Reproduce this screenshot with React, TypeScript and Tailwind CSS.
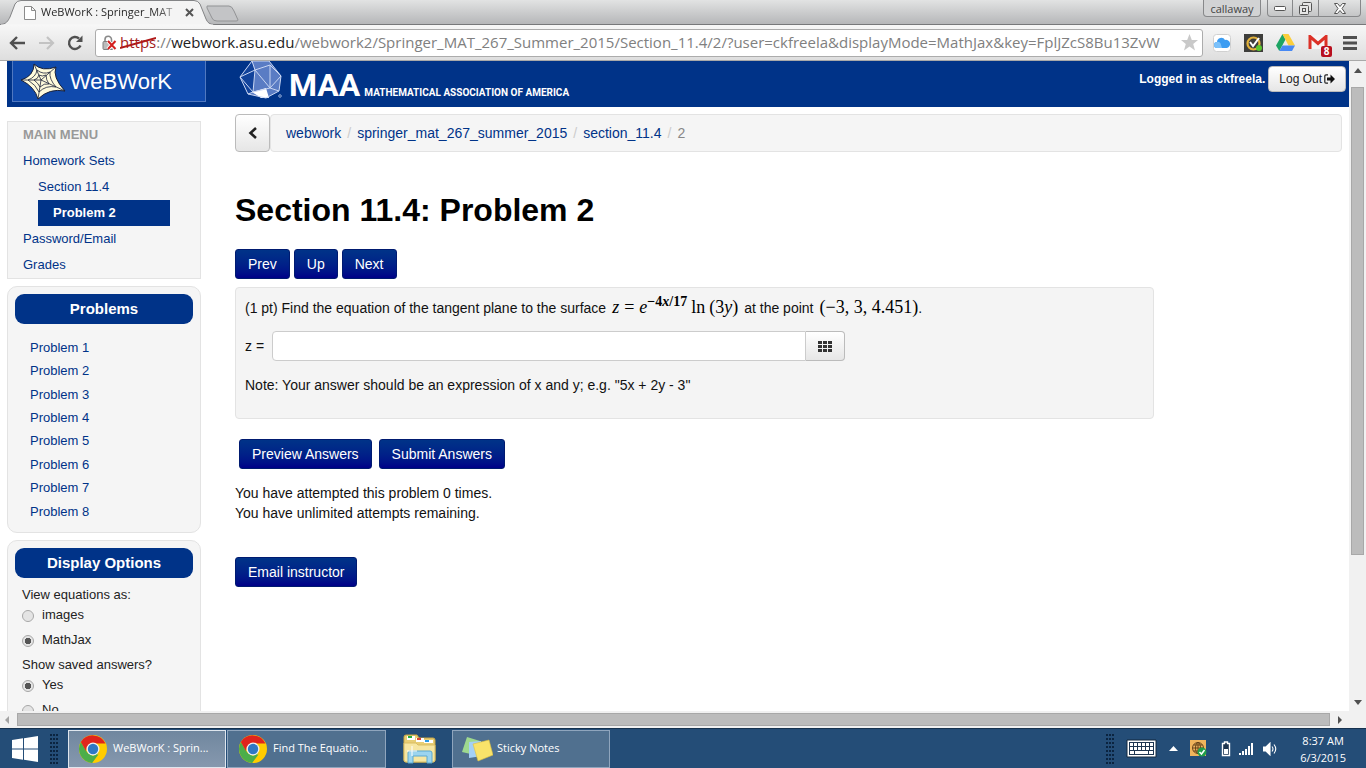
import React, { useState } from 'react';

const uiFont = "font-['Open_Sans','Noto_Sans',sans-serif]";
const mathFont = "font-['Liberation_Serif',serif]";

const problems = [1, 2, 3, 4, 5, 6, 7, 8];

const urlPath =
  '/webwork2/Springer_MAT_267_Summer_2015/Section_11.4/2/?user=ckfreela&displayMode=MathJax&key=FplJZcS8Bu13ZvW';

const ChromeLogo: React.FC = () => (
  <svg width="28" height="28" viewBox="0 0 28 28" className="shrink-0">
    <circle cx="14" cy="14" r="14" fill="#fc0" />
    <path d="M1.9 7A14 14 0 0 0 13 28l6.500-10.500L14 21a7 7 0 0 1-6-3.500Z" fill="#4cae49" />
    <path d="M1.9 7 8 17.500 14 21l5.500-1.500L13 28" fill="#4cae49" />
    <path d="M1.900 7A14 14 0 0 1 26.500 8.500H14L8 12 7 16Z" fill="#e0241c" />
    <circle cx="14" cy="14" r="6.500" fill="#f1f1f1" />
    <circle cx="14" cy="14" r="5.200" fill="#2f78c4" />
  </svg>
);

const Grip: React.FC = () => (
  <svg width="8" height="32" viewBox="0 0 8 32" fill="#0b2440" className="shrink-0">
    {[1, 5, 9, 13, 17, 21, 25, 29].map((y) => (
      <g key={y}>
        <rect x="0" y={y} width="2" height="2" />
        <rect x="3" y={y} width="2" height="2" />
        <rect x="6" y={y} width="2" height="2" />
      </g>
    ))}
  </svg>
);

const WebLogo: React.FC = () => (
  <svg width="46" height="40" viewBox="0 0 46 40" className="shrink-0" strokeLinejoin="round">
    <path
      d="M14 3Q22 11 36 6Q32 16 45 30Q29 27 18 38Q15 26 1 19Q14 15 14 3Z"
      fill="#fffbdc"
      stroke="#1c2238"
    />
    <g fill="none" stroke="#1c2238" strokeWidth=".8">
      <path d="M14 3 21 19 36 6M21 19 45 30M21 19 18 38M21 19 1 19" />
      <path d="M17 9Q23 14 30 11Q29 18 36 26Q26 24 19 31Q16 24 8 19Q16 16 17 9Z" />
      <path d="M19 14Q22 16 26 14Q26 19 29 23Q24 22 20 26Q18 22 14 19Q18 18 19 14Z" />
    </g>
  </svg>
);

const MaaLogo: React.FC = () => (
  <svg width="44" height="38" viewBox="0 0 44 38" className="shrink-0" strokeLinejoin="round">
    <path d="M13 0 30 0 42 15 40 30 27 37 9 33 1 16Z" fill="#5a7cc4" />
    <path d="M1 16 9 33 14 31 16 11 13 0Z" fill="#12439b" />
    <path d="M13 31 27 27 30 37 22 37Z" fill="#fff" />
    <g fill="none" stroke="#c9d6f2" strokeWidth="1">
      <path d="M13 0 30 0 42 15 40 30 27 37 9 33 1 16ZM13 0 16 9 31 4 42 15 31 27 14 31 16 9 1 16 14 31 9 33M31 4V27L40 30M16 9 31 27" />
    </g>
    <circle cx="41" cy="35" r="1.300" fill="none" stroke="#c9d6f2" strokeWidth=".7" />
  </svg>
);

const TabStrip: React.FC = () => (
  <div className={`flex h-[25px] shrink-0 border-b border-[#77787a] bg-linear-to-b from-[#e2e3e3] to-[#b6b7b9] ${uiFont}`}>
    <div className="relative flex h-[25px] w-[206px] items-center pl-6">
      <svg className="absolute top-0 left-0" width="240" height="25" viewBox="0 0 240 25">
        <path d="M207 6h22q3 0 5 5l4 9q0 1-2 1h-19q-4 0-5-3l-5-10q0-2 0-2Z" fill="#c3c4c6" stroke="#929395" />
        <path d="M0 24.500C6 24.500 8 21 10 17L15 4Q17 .5 21 .5H194Q198 .5 200 4L206 19Q208 24.500 214 24.500V26H0Z" fill="#f4f4f4" stroke="#838486" />
        <path d="M1 25h212" stroke="#f8f8f8" />
      </svg>
      <svg className="relative" width="12" height="14" viewBox="0 0 12 14" fill="#fff" stroke="#8b8b8b">
        <path d="M.5.5h7l4 4v9H.5ZM7.500.5v4h4" />
      </svg>
      <span className="relative ml-[5px] w-[140px] bg-linear-to-r from-[#222] from-80% to-[#ccc] bg-clip-text text-[11px] whitespace-nowrap text-transparent">
        WeBWorK : Springer_MAT
      </span>
      <button aria-label="Close tab" className="relative ml-1">
        <svg width="9" height="9" viewBox="0 0 9 9" stroke="#555" strokeWidth="2">
          <path d="m1 1 7 7M8 1 1 8" />
        </svg>
      </button>
    </div>
    <div className="ml-auto flex h-[17px] pr-[5px] text-[#444]">
      <button className="mr-1.5 w-[58px] rounded-b border border-t-0 border-[#87888a] bg-[#d2d3d4] text-[11px] leading-[15px]">
        callaway
      </button>
      <button aria-label="Minimize" className="flex w-[26px] items-center justify-center rounded-bl border border-t-0 border-[#87888a]">
        <svg width="12" height="5" fill="#fff" stroke="#555"><rect x=".5" y=".5" width="11" height="4" rx="1" /></svg>
      </button>
      <button aria-label="Restore" className="flex w-[25px] items-center justify-center border-b border-[#87888a]">
        <svg width="13" height="13" fill="#e6e6e6" stroke="#555">
          <rect x="3.500" y=".5" width="9" height="9" rx="1" />
          <rect x=".5" y="3.500" width="9" height="9" rx="1" />
          <rect x="3.500" y="6.500" width="3" height="3" />
        </svg>
      </button>
      <button aria-label="Close" className="flex w-[43px] items-center justify-center rounded-br border border-t-0 border-[#87888a]">
        <svg width="12" height="11" fill="#fff" stroke="#555">
          <path d="M.5.5h3L6 3.500 8.500.5h3L8 5.500l3.500 5h-3L6 7.500l-2.500 3h-3l3.500-5Z" />
        </svg>
      </button>
    </div>
  </div>
);

const Toolbar: React.FC = () => {
  const [path, setPath] = useState(urlPath);

  return (
    <div className={`flex h-9 shrink-0 items-center border-b border-[#a9a9a9] bg-linear-to-b from-[#f7f7f7] to-[#dedede] px-[9px] ${uiFont}`}>
      <button aria-label="Back">
        <svg width="16" height="14" viewBox="0 0 16 14" fill="none" stroke="#505050" strokeWidth="2.400">
          <path d="M16 7H2M8 1 2 7l6 6" />
        </svg>
      </button>
      <button aria-label="Forward" className="ml-3.5">
        <svg width="16" height="14" viewBox="0 0 16 14" fill="none" stroke="#c3c3c3" strokeWidth="2.200">
          <path d="M0 7h14M8 1l6 6-6 6" />
        </svg>
      </button>
      <button aria-label="Reload" className="ml-3">
        <svg width="16" height="16" viewBox="0 0 16 16" fill="none" stroke="#505050" strokeWidth="2.400">
          <path d="M13.500 10.500A6 6 0 1 1 12 3.500" />
          <path d="M15.500.5V7H9Z" fill="#505050" stroke="none" />
        </svg>
      </button>
      <div className="ml-3 flex h-7 min-w-0 flex-1 items-center rounded-[3px] border border-[#acacac] bg-white pr-1 pl-1.5 text-[15px]">
        <svg width="15" height="16" viewBox="0 0 15 16" className="shrink-0">
          <path d="M3 7V4.500a3 3 0 0 1 6.500 0V7" fill="none" stroke="#8a8a8a" strokeWidth="1.600" />
          <rect x="1" y="6.500" width="10" height="8" rx="1" fill="#bbb" stroke="#808080" />
          <path d="m6 6 7.500 8M13.500 6 6 14" stroke="#fff" strokeWidth="4" />
          <path d="m6 6 7.500 8M13.500 6 6 14" stroke="#d4201f" strokeWidth="2" />
        </svg>
        <span className="relative ml-[3px] text-[#a31b1b]">
          https
          <svg className="absolute top-1 left-0" width="36" height="15" viewBox="0 0 36 15">
            <path d="M0 13 36 3" stroke="#b01919" strokeWidth="2" />
          </svg>
        </span>
        <span className="text-[#808080]">://</span>
        <label htmlFor="url" className="text-[#222]">webwork.asu.edu</label>
        <input
          id="url"
          type="text"
          value={path}
          onChange={(e) => setPath(e.target.value)}
          className="min-w-0 flex-1 text-[#808080] outline-none"
        />
        <button aria-label="Bookmark" className="ml-1 shrink-0">
          <svg width="17" height="17" viewBox="0 0 17 17" fill="#c9c9c9">
            <path d="m8.500 0 2.300 6H17l-4.800 4 1.800 6.500-5.500-4-5.500 4L4.800 10 0 6h6.200Z" />
          </svg>
        </button>
      </div>
      <div className="ml-2.5 flex shrink-0 items-center gap-[13px]">
        <svg width="18" height="18" viewBox="0 0 18 18">
          <rect x=".5" y=".5" width="17" height="17" rx="3" fill="#fff" stroke="#d0d0d0" />
          <path d="M4 14a3 3 0 0 1 0-6 4.300 4.300 0 0 1 8-2 4 4 0 0 1 2 8Z" fill="#3b9cf2" />
          <path d="M4 14a3 3 0 0 1 0-6 3 3 0 0 1 4 3l1 3Z" fill="#7cc1fa" />
        </svg>
        <svg width="19" height="18" viewBox="0 0 19 18">
          <rect width="19" height="18" fill="#3e3e3b" />
          <circle cx="9.500" cy="9.500" r="6" fill="none" stroke="#e3b23a" strokeWidth="2.200" />
          <path d="m6 8 3 4 6-8" fill="none" stroke="#fff" strokeWidth="2" />
          <circle cx="15" cy="14" r="3" fill="#5bc72e" />
        </svg>
        <svg width="19" height="17" viewBox="0 0 19 17">
          <path d="M6.500 0 0 11.500 3.300 17 9.500 5.500Z" fill="#1da463" />
          <path d="M6.500 0h6L19 11.500h-6.500Z" fill="#fbce3b" />
          <path d="M6.500 11.500H19L16 17H3.300Z" fill="#4688f4" />
        </svg>
        <svg width="25" height="22" viewBox="0 0 25 22" className="mt-1.5">
          <rect x="1" y="0" width="18" height="14" fill="#f5f5f5" />
          <path d="M2 14V1.500l8 7 8-7V14" fill="none" stroke="#dc3127" strokeWidth="3" />
          <rect x="13" y="11" width="11" height="11" rx="2" fill="#b80f1e" />
          <text x="18.500" y="20" fill="#fff" fontSize="10" fontWeight="bold" textAnchor="middle">8</text>
        </svg>
      </div>
      <button aria-label="Menu" className="ml-2.5 shrink-0">
        <svg width="14" height="14" viewBox="0 0 14 14" fill="#505050">
          <path d="M0 0h14v3H0ZM0 5.500h14v3H0ZM0 11h14v3H0Z" />
        </svg>
      </button>
    </div>
  );
};

const SiteHeader: React.FC = () => (
  <header className="flex h-[46px] items-start bg-[#003388] pr-[3px] pl-[5px] text-white">
    <a href="#" className="flex h-[41px] w-[194px] items-center gap-1 border border-t-0 border-[#5078c0] bg-[#104aad] pl-[7px] text-[22px]">
      <WebLogo />
      WeBWorK
    </a>
    <a href="#" className="ml-[33px] flex items-start font-['Roboto',sans-serif] font-bold">
      <MaaLogo />
      <span className="ml-1.5 flex items-baseline gap-1">
        <span className="text-[32px] leading-[48px]">MAA</span>
        <span className="text-[10px]">MATHEMATICAL ASSOCIATION OF AMERICA</span>
      </span>
    </a>
    <div className="mt-[5px] ml-auto flex items-center gap-[3px]">
      <span className="text-[12px] font-bold">Logged in as ckfreela.</span>
      <button className="flex h-[26px] items-center gap-0.5 rounded-sm border border-[#bbb] bg-linear-to-b from-white to-[#e6e6e6] px-2.5 text-[12px] text-[#222]">
        Log Out
        <svg width="11" height="10" viewBox="0 0 11 10" fill="none">
          <path d="M4 .8H2Q.8.8.8 2v6Q.8 9.200 2 9.200h2" stroke="#222" strokeWidth="1.200" />
          <path d="M3 3.500h3.500V.5L11 5 6.500 9.500V6.500H3Z" fill="#111" />
        </svg>
      </button>
    </div>
  </header>
);

type RadioProps = {
  name: string;
  label: string;
  checked: boolean;
  onSelect: () => void;
};

const RadioRow: React.FC<RadioProps> = ({ name, label, checked, onSelect }) => (
  <label className="flex h-[25px] items-start gap-2 leading-5">
    <input
      type="radio"
      name={name}
      checked={checked}
      onChange={onSelect}
      className="mt-[5px] h-3 w-3 appearance-none rounded-full border border-[#a5a5a5] bg-[#e4e4e4] bg-clip-padding checked:bg-[radial-gradient(circle,#555_0_3px,#e4e4e4_3px)]"
    />
    {label}
  </label>
);

const Sidebar: React.FC = () => {
  const [display, setDisplay] = useState('MathJax');
  const [saved, setSaved] = useState('Yes');

  return (
    <aside className="flex w-[194px] shrink-0 flex-col text-[13px]">
      <nav className="border border-[#e3e3e3] bg-[#f5f5f5] px-[15px] leading-[26px] text-[#003388]">
        <h2 className="font-bold text-[#999]">MAIN MENU</h2>
        <ul>
          <li><a href="#">Homework Sets</a></li>
          <li className="pl-[15px]"><a href="#">Section 11.4</a></li>
          <li className="px-[15px]">
            <a href="#" className="block bg-[#003388] pl-[15px] font-bold text-white">Problem 2</a>
          </li>
          <li><a href="#">Password/Email</a></li>
          <li><a href="#">Grades</a></li>
        </ul>
      </nav>
      <section className="mt-[7px] rounded-[10px] border border-[#e3e3e3] bg-[#f5f5f5] p-[7px]">
        <h2 className="rounded-[9px] bg-[#003388] text-center text-[15px] leading-[30px] font-bold text-white">Problems</h2>
        <ul className="mt-3 mb-0.5 grid h-[187px] items-center pl-[15px] text-[#003388]">
          {problems.map((n) => (
            <li key={n}><a href="#">Problem {n}</a></li>
          ))}
        </ul>
      </section>
      <section className="mt-[7px] rounded-[10px] border border-[#e3e3e3] bg-[#f5f5f5] p-[7px]">
        <h2 className="rounded-[9px] bg-[#003388] text-center text-[15px] leading-[30px] font-bold text-white">Display Options</h2>
        <form className="px-[7px] pt-[7px] text-[#222]">
          <fieldset>
            <legend className="leading-5">View equations as:</legend>
            {['images', 'MathJax'].map((v) => (
              <RadioRow key={v} name="display" label={v} checked={display === v} onSelect={() => setDisplay(v)} />
            ))}
          </fieldset>
          <fieldset>
            <legend className="leading-5">Show saved answers?</legend>
            {['Yes', 'No'].map((v) => (
              <RadioRow key={v} name="saved" label={v} checked={saved === v} onSelect={() => setSaved(v)} />
            ))}
          </fieldset>
        </form>
      </section>
    </aside>
  );
};

const BlueButton: React.FC<{ children: React.ReactNode }> = ({ children }) => (
  <button
    type="button"
    className="h-[30px] rounded-[3px] border border-[#001a70] bg-linear-to-b from-[#003388] to-[#000088] px-3 text-[14px] whitespace-nowrap text-white"
  >
    {children}
  </button>
);

const ProblemPage: React.FC = () => {
  const [answer, setAnswer] = useState('');

  return (
    <main className="min-w-0 flex-1 text-[14px] leading-5 text-[#111]">
      <div className="flex h-[38px]">
        <button aria-label="Back to set" className="flex w-[35px] items-center justify-center rounded border border-[#bbb] bg-linear-to-b from-white to-[#e6e6e6]">
          <svg width="9" height="12" viewBox="0 0 9 12" fill="none" stroke="#222" strokeWidth="2.600">
            <path d="M8 1 2.500 6 8 11" />
          </svg>
        </button>
        <nav className="flex flex-1 items-center gap-1.5 rounded border border-[#e3e3e3] bg-[#f5f5f5] px-[15px] text-[#003388]">
          <a href="#">webwork</a>
          <span className="text-[#ccc]">/</span>
          <a href="#">springer_mat_267_summer_2015</a>
          <span className="text-[#ccc]">/</span>
          <a href="#">section_11.4</a>
          <span className="text-[#ccc]">/</span>
          <span className="text-[#888]">2</span>
        </nav>
      </div>
      <h1 className="mt-[38px] text-[32px] leading-10 font-bold text-black">Section 11.4: Problem 2</h1>
      <div className="mt-[19px] flex gap-1">
        <BlueButton>Prev</BlueButton>
        <BlueButton>Up</BlueButton>
        <BlueButton>Next</BlueButton>
      </div>
      <div className="mt-2 w-[83%] rounded-sm border border-[#e3e3e3] bg-[#f4f4f4] px-[9px] pt-[9px] pb-[23px]">
        <p className="flex h-5 items-baseline gap-1.5 whitespace-nowrap">
          <span>(1 pt) Find the equation of the tangent plane to the surface</span>
          <span className={`text-[18px] text-black ${mathFont}`}>
            <i>z</i>
            <span className="mx-[5px]">=</span>
            <i>e</i>
            <sup className="text-[14px] font-bold">−4<i>x</i>/17</sup>
            <span className="mx-1">ln</span>
            (3<i>y</i>)
          </span>
          <span>at the point</span>
          <span>
            <span className={`text-[18px] text-black ${mathFont}`}>(−3, 3, 4.451)</span>.
          </span>
        </p>
        <div className="mt-3.5 flex items-center">
          <label htmlFor="answer" className="w-[27px]">z =</label>
          <input
            id="answer"
            type="text"
            value={answer}
            onChange={(e) => setAnswer(e.target.value)}
            className="h-[30px] w-[534px] rounded-l border border-[#ccc] bg-white px-1.5 outline-none"
          />
          <button
            type="button"
            aria-label="Equation editor"
            className="flex h-[30px] w-[39px] items-center justify-center rounded-r border border-l-0 border-[#bbb] bg-linear-to-b from-white to-[#e6e6e6]"
          >
            <svg width="14" height="11" viewBox="0 0 14 11" fill="#333">
              <path d="M0 0h4v3H0ZM5 0h4v3H5ZM10 0h4v3h-4ZM0 4h4v3H0ZM5 4h4v3H5ZM10 4h4v3h-4ZM0 8h4v3H0ZM5 8h4v3H5ZM10 8h4v3h-4Z" />
            </svg>
          </button>
        </div>
        <p className="mt-3.5">Note: Your answer should be an expression of x and y; e.g. "5x + 2y - 3"</p>
      </div>
      <div className="mt-5 flex gap-[7px] pl-1">
        <BlueButton>Preview Answers</BlueButton>
        <BlueButton>Submit Answers</BlueButton>
      </div>
      <p className="mt-3.5">
        You have attempted this problem 0 times.
        <br />
        You have unlimited attempts remaining.
      </p>
      <div className="mt-[34px]">
        <BlueButton>Email instructor</BlueButton>
      </div>
    </main>
  );
};

const Taskbar: React.FC = () => (
  <footer className={`flex h-10 shrink-0 items-center border-t border-[#16324f] bg-[#244d77] text-[11px] text-white ${uiFont}`}>
    <button aria-label="Start" className="ml-3">
      <svg width="26" height="26" viewBox="0 0 26 26" fill="#fff">
        <path d="M0 4 11 2.300V12.500H0ZM12 2.200 26 0V12.500H12ZM0 13.500H11V23.700L0 22ZM12 13.500H26V26L12 23.800Z" />
      </svg>
    </button>
    <span className="ml-3"><Grip /></span>
    <button className="ml-2.5 flex h-[38px] w-[158px] items-center gap-1.5 border border-[#dfe6ee] bg-linear-to-b from-[#70879f] to-[#8698ae] pl-2.5 whitespace-nowrap">
      <ChromeLogo />
      WeBWorK : Sprin...
    </button>
    <button className="ml-px flex h-[38px] w-[159px] items-center gap-1.5 border border-[#8fa5bd] bg-[#50708f] pl-[11px] whitespace-nowrap">
      <ChromeLogo />
      Find The Equatio...
    </button>
    <button aria-label="File Explorer" className="ml-4">
      <svg width="34" height="30" viewBox="0 0 34 30">
        <path d="M2 3q0-2 2-2h11l2 3h14q2 0 2 2v20q0 2-2 2H4q-2 0-2-2Z" fill="#e8ce75" stroke="#c7a545" />
        <path d="M5 2h8v4H5ZM14 4h8v4h-8ZM22 6h9v3h-9Z" fill="#fff" />
        <path d="M6 2h4v2H6Z" fill="#22ad3f" />
        <path d="M15 4h4v2h-4Z" fill="#d84332" />
        <path d="M23 6h4v2h-4Z" fill="#2b9be6" />
        <path d="M2 9h12l2 2h17v15q0 2-2 2H4q-2 0-2-2Z" fill="#f6e6a2" stroke="#d9bd62" />
        <path d="M6 29V19q0-2 2-2h20q2 0 2 2v10h-5v-7H11v7Z" fill="#9bd4ef" stroke="#5ba8d0" />
        <path d="M10 12v10M5 17h10" stroke="#fff" />
      </svg>
    </button>
    <button className="ml-4 flex h-[38px] w-[158px] items-center gap-1 border border-[#8fa5bd] bg-[#50708f] pl-2 whitespace-nowrap">
      <svg width="32" height="28" viewBox="0 0 32 28" className="shrink-0">
        <path d="M6 2 19 6 14 20 1 17Z" fill="#9ed98f" />
        <path d="M8 7 20 6 21 21 8 23Z" fill="#a4d0f5" />
        <path d="M12 9 28 5 32 20 17 26Z" fill="#f9e36a" stroke="#dcc03f" strokeWidth=".6" />
      </svg>
      Sticky Notes
    </button>
    <div className="ml-auto flex items-center">
      <Grip />
      <svg width="31" height="19" viewBox="0 0 31 19" className="ml-3">
        <path d="M1 1h29v17H1Z" fill="#fff" stroke="#12283f" />
        <path d="M3 3h25v13H3Z" fill="#1d3550" />
        <path d="M4 4h3v3H4ZM8 4h3v3H8ZM12 4h3v3h-3ZM16 4h3v3h-3ZM20 4h3v3h-3ZM24 4h3v3h-3ZM4 8h3v3H4ZM8 8h3v3H8ZM12 8h3v3h-3ZM16 8h3v3h-3ZM20 8h3v3h-3ZM24 8h3v3h-3ZM4 12h4v3H4ZM9 12h13v3H9ZM23 12h4v3h-4Z" fill="#fff" />
      </svg>
      <svg width="9" height="5" viewBox="0 0 9 5" className="ml-3" fill="#fff"><path d="M0 5 4.500 0 9 5Z" /></svg>
      <svg width="17" height="17" viewBox="0 0 17 17" className="ml-3">
        <rect width="16" height="16" fill="#f0b45c" />
        <g fill="none" stroke="#5e3c16" strokeWidth=".9">
          <circle cx="8" cy="8" r="5.500" />
          <ellipse cx="8" cy="8" rx="2.500" ry="5.500" />
          <path d="M2.500 8h11M3.500 5h9M3.500 11h9M8 2.500v11" />
        </g>
        <circle cx="12" cy="12" r="4.500" fill="#219e49" />
        <path d="m9.500 12 2 2 3-4" fill="none" stroke="#fff" strokeWidth="1.500" />
      </svg>
      <svg width="10" height="16" viewBox="0 0 10 16" className="ml-3.5">
        <path d="M3.500 1h3v1.500h2v12h-7v-12h2Z" fill="#1d3550" stroke="#fff" strokeWidth="1.400" />
        <path d="M3 8h4v5H3Z" fill="#fff" />
      </svg>
      <svg width="16" height="12" viewBox="0 0 16 12" className="ml-2" fill="#fff">
        <path d="M0 10h2v2H0ZM3 8h2v4H3ZM6 6h2v6H6ZM9 3h2v9H9ZM12 0h2v12h-2Z" />
      </svg>
      <svg width="15" height="14" viewBox="0 0 15 14" className="ml-2" fill="none" stroke="#fff" strokeWidth="1.100">
        <path d="M0 5h3l4-4v12L3 9H0Z" fill="#fff" />
        <path d="M9 4.500q2 2.500 0 5M11 2.500q3.500 4.500 0 9" />
      </svg>
      <div className="mr-5 ml-[22px] text-center leading-[17px]">
        8:37 AM
        <br />
        6/3/2015
      </div>
    </div>
  </footer>
);

const App: React.FC = () => (
  <div className="flex h-screen flex-col overflow-hidden bg-white font-['Liberation_Sans',Arial,sans-serif]">
    <TabStrip />
    <Toolbar />
    <div className="flex min-h-0 flex-1">
      <div className="min-w-0 flex-1 overflow-hidden pl-[7px]">
        <SiteHeader />
        <div className="flex items-start gap-[34px] pt-[7px] pr-[7px]">
          <div className="pt-[7px]">
            <Sidebar />
          </div>
          <ProblemPage />
        </div>
      </div>
      <div className="flex w-[17px] shrink-0 flex-col items-center bg-[#f1f1f1] pt-[3px] pb-1.5">
        <svg width="8" height="5" className="my-1 shrink-0" fill="#505050"><path d="M0 5 4 0 8 5Z" /></svg>
        <div className="mt-2.5 h-[73%] w-[13px] border border-[#a8a8a8] bg-[#bcbcbc]" />
        <svg width="8" height="5" className="mt-auto shrink-0" fill="#505050"><path d="M0 0 4 5 8 0Z" /></svg>
      </div>
    </div>
    <div className="flex h-[17px] shrink-0 items-center gap-2 bg-[#f1f1f1] pr-6 pl-[5px]">
      <svg width="4" height="8" className="shrink-0" fill="#a3a3a3"><path d="M4 0 0 4 4 8Z" /></svg>
      <div className="h-[13px] flex-1 border border-[#a8a8a8] bg-[#bcbcbc]" />
      <svg width="4" height="8" className="shrink-0" fill="#505050"><path d="M0 0 4 4 0 8Z" /></svg>
    </div>
    <Taskbar />
  </div>
);

export default App;
